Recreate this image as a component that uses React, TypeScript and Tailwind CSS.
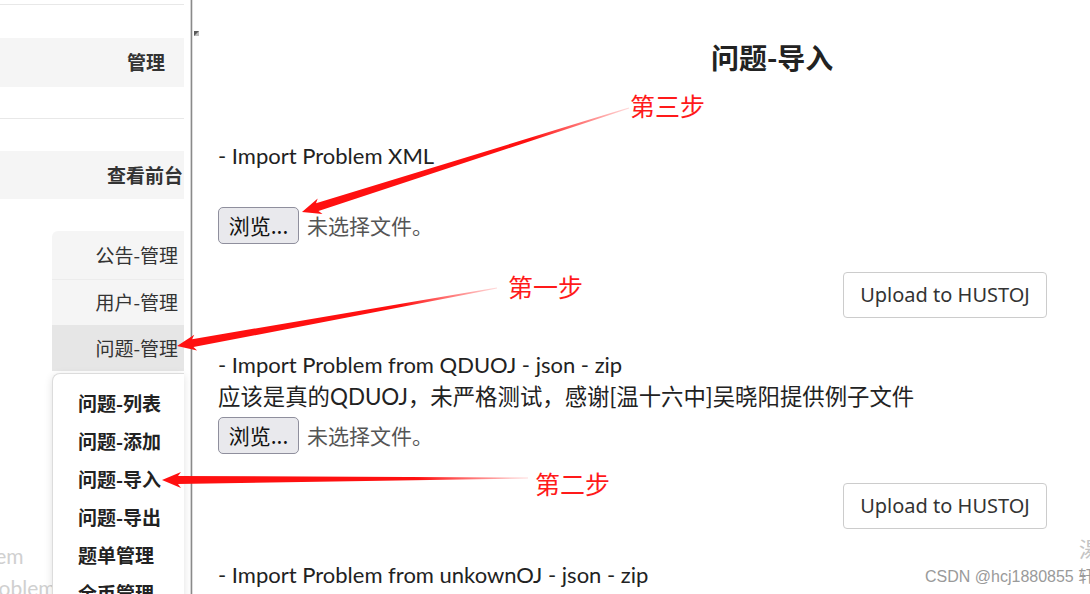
import React from "react";

type P = [number, number];

function arrowPoints(t: P, h: P, tailW: number, shaftW: number, headW: number, headL: number): string {
  const dx = h[0] - t[0];
  const dy = h[1] - t[1];
  const len = Math.hypot(dx, dy);
  const ux = dx / len;
  const uy = dy / len;
  const nx = -uy;
  const ny = ux;
  const bx = h[0] - ux * headL;
  const by = h[1] - uy * headL;
  const pts: P[] = [
    [t[0] + (nx * tailW) / 2, t[1] + (ny * tailW) / 2],
    [bx + (nx * shaftW) / 2, by + (ny * shaftW) / 2],
    [bx + (nx * headW) / 2 - ux * 3, by + (ny * headW) / 2 - uy * 3],
    [h[0], h[1]],
    [bx - (nx * headW) / 2 - ux * 3, by - (ny * headW) / 2 - uy * 3],
    [bx - (nx * shaftW) / 2, by - (ny * shaftW) / 2],
    [t[0] - (nx * tailW) / 2, t[1] - (ny * tailW) / 2],
  ];
  return pts.map((p) => `${p[0].toFixed(1)},${p[1].toFixed(1)}`).join(" ");
}

const arrows: { id: string; t: P; h: P }[] = [
  { id: "a3", t: [629, 108], h: [302, 212] },
  { id: "a1", t: [497, 288], h: [177, 346] },
  { id: "a2", t: [528, 478], h: [162, 480] },
];

function BrowseRow() {
  return (
    <div className="flex items-center">
      <div className="flex h-[37px] w-[81px] items-center justify-center rounded-[5px] border border-[#8f8f9d] bg-[#e9e9ed] text-[21px] text-[#111] [font-family:'Noto_Sans_CJK_SC',sans-serif]">
        浏览...
      </div>
      <span className="ml-[8px] text-[21px] text-[#555] [font-family:'Noto_Sans_CJK_SC',sans-serif]">未选择文件。</span>
    </div>
  );
}

function UploadButton() {
  return (
    <div className="flex justify-end">
      <div className="flex h-[46px] w-[204px] items-center justify-center rounded-[4px] border border-[#ccc] bg-white text-[20px] text-[#333] [font-family:'Noto_Sans',sans-serif]">
        Upload to HUSTOJ
      </div>
    </div>
  );
}

export default function App() {
  return (
    <div className="relative flex h-[594px] w-[1090px] overflow-hidden bg-white text-[#333] [font-family:Lato,'Noto_Sans_CJK_SC',sans-serif]">
      {/* Sidebar */}
      <div className="flex w-[190px] shrink-0 flex-col pr-[6px] [font-family:'Noto_Sans_CJK_SC',sans-serif]">
        <div className="mt-[4px] shrink-0 border-t border-[#e8e8e8]" />
        <div className="mt-[33px] flex h-[49px] shrink-0 items-center justify-end bg-[#f5f5f5] pr-[19px] text-[19px] font-bold text-[#333]">
          管理
        </div>
        <div className="mt-[31px] shrink-0 border-t border-[#e8e8e8]" />
        <div className="mt-[32px] flex h-[48px] shrink-0 items-center justify-end bg-[#f5f5f5] pr-[1px] text-[19px] font-bold text-[#333]">
          查看前台
        </div>
        <div className="ml-[52px] mt-[32px] flex shrink-0 flex-col overflow-hidden rounded-tl-[6px] bg-[#f5f5f5] text-[19px] text-[#333]">
          <div className="flex h-[48px] items-center justify-end pr-[6px]">公告-管理</div>
          <div className="flex h-[46px] items-center justify-end border-t border-[#ececec] pr-[6px]">用户-管理</div>
          <div className="flex h-[46px] items-center justify-end bg-[#e6e6e6] pr-[6px]">问题-管理</div>
        </div>
        <div className="mt-[2px] flex shrink-0">
          <div className="w-[52px] shrink-0 overflow-hidden text-[21px] leading-[32px] text-[#d0d0d0] [font-family:Lato,sans-serif]">
            <div className="ml-[-53px] mt-[167px] whitespace-nowrap">Problem</div>
            <div className="ml-[-21px] whitespace-nowrap">Problem</div>
          </div>
          <div className="flex flex-1 flex-col rounded-tl-[8px] border-l border-t border-[#dcdcdc] bg-white pl-[25px] pt-[10px] text-[19px] font-bold leading-[38px] text-[#222] shadow-[0_2px_8px_rgba(0,0,0,0.12)]">
            <div>问题-列表</div>
            <div>问题-添加</div>
            <div>问题-导入</div>
            <div>问题-导出</div>
            <div>题单管理</div>
            <div>全币管理</div>
          </div>
        </div>
      </div>

      {/* Divider */}
      <div className="flex w-[3px] shrink-0">
        <div className="w-px bg-[#d4d4d4]" />
        <div className="w-px bg-[#8a8a8a]" />
        <div className="w-px bg-[#dedede]" />
      </div>

      {/* Main */}
      <div className="flex flex-1 flex-col pl-[25px] pr-[43px] pt-[31px] text-[22px] text-[#222]">
        <svg width="5" height="5" className="ml-[-24px] block shrink-0">
          <rect width="5" height="5" fill="#bdbdbd" />
          <polygon points="0,0 5,0 0,5" fill="#5a5a5a" />
        </svg>
        <div className="ml-[493px] mt-[3px] shrink-0 text-[28px] font-bold leading-[36px] text-[#222] [font-family:'Noto_Sans_CJK_SC',sans-serif]">
          问题-导入
        </div>
        <div className="mt-[65px] shrink-0 leading-[32px]">- Import Problem XML</div>
        <div className="mt-[35px] shrink-0">
          <BrowseRow />
        </div>
        <div className="mt-[28px] shrink-0">
          <UploadButton />
        </div>
        <div className="mt-[31px] shrink-0 leading-[32px]">- Import Problem from QDUOJ - json - zip</div>
        <div className="shrink-0 whitespace-nowrap text-[22.4px] leading-[32px]">应该是真的QDUOJ，未严格测试，感谢[温十六中]吴晓阳提供例子文件</div>
        <div className="mt-[4px] shrink-0">
          <BrowseRow />
        </div>
        <div className="mt-[29px] shrink-0">
          <UploadButton />
        </div>
        <div className="mt-[30px] shrink-0 whitespace-nowrap leading-[32px]">- Import Problem from unkownOJ - json - zip</div>
      </div>

      {/* Annotations */}
      <svg className="pointer-events-none absolute left-0 top-0" width="1090" height="594">
        <defs>
          {arrows.map((a) => (
            <linearGradient key={a.id} id={a.id} gradientUnits="userSpaceOnUse" x1={a.t[0]} y1={a.t[1]} x2={a.h[0]} y2={a.h[1]}>
              <stop offset="0" stopColor="#ff1010" stopOpacity="0.15" />
              <stop offset="0.3" stopColor="#ff1010" stopOpacity="1" />
              <stop offset="1" stopColor="#ff1010" stopOpacity="1" />
            </linearGradient>
          ))}
        </defs>
        {arrows.map((a) => (
          <polygon key={a.id} points={arrowPoints(a.t, a.h, 1, 8, 16, 16)} fill={`url(#${a.id})`} />
        ))}
      </svg>
      <div className="absolute left-[630px] top-[88px] text-[25px] leading-[34px] text-[#ff1a1a] [font-family:'Noto_Sans_CJK_SC',sans-serif]">第三步</div>
      <div className="absolute left-[508px] top-[269px] text-[25px] leading-[34px] text-[#ff1a1a] [font-family:'Noto_Sans_CJK_SC',sans-serif]">第一步</div>
      <div className="absolute left-[535px] top-[466px] text-[25px] leading-[34px] text-[#ff1a1a] [font-family:'Noto_Sans_CJK_SC',sans-serif]">第二步</div>
      <div className="absolute left-[1079px] top-[534px] text-[21px] leading-[28px] text-[#c4c4c4] [font-family:'Noto_Sans_CJK_SC',sans-serif]">湯</div>
      <div className="absolute left-[925px] top-[567px] whitespace-nowrap text-[16px] leading-[20px] text-[#9a9a9a] [font-family:'Liberation_Sans','Noto_Sans_CJK_SC',sans-serif]">
        CSDN @hcj1880855 轩
      </div>
    </div>
  );
}
